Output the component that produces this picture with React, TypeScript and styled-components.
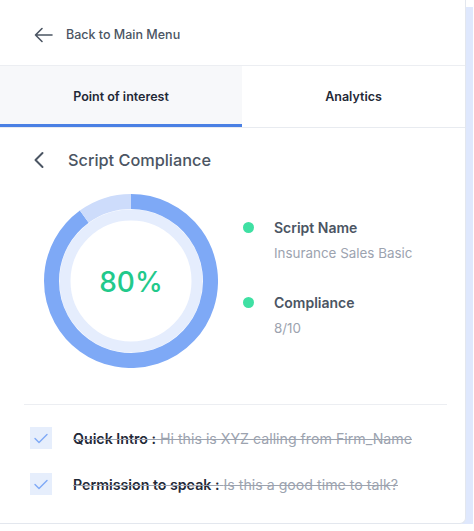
import React from "react";
import styled, { createGlobalStyle } from "styled-components";

const GlobalStyle = createGlobalStyle`
  html, body {
    margin: 0;
    padding: 0;
    background: #ffffff;
    font-family: Inter, "Noto Sans", sans-serif;
  }
`;

const ring = "#7ea9f6";
const ringGap = "#cddcfb";
const ringInner = "#e5edfd";

const Card = styled.div`
  width: 466px;
  height: 524px;
  box-sizing: border-box;
  background: #ffffff;
  border-right: 1px solid #e3e7ee;
  border-bottom: 1px solid #e3e7ee;
  border-bottom-right-radius: 6px;
  box-shadow: 7px 7px 0 #dfe8fd;
  display: flex;
  flex-direction: column;
`;

const BackRow = styled.div`
  height: 66px;
  display: flex;
  align-items: center;
  padding: 4px 0 0 34px;
  gap: 13px;
  color: #4b5563;
  font-size: 12.5px;
  font-weight: 500;
  border-bottom: 1px solid #eceef2;
  box-sizing: border-box;
`;

const Tabs = styled.div`
  display: flex;
  height: 62px;
  border-bottom: 1px solid #e8ebf0;
  box-sizing: border-box;
`;

const Tab = styled.div<{ $active?: boolean }>`
  flex: ${(p) => (p.$active ? "0 0 242px" : "1")};
  display: flex;
  align-items: center;
  justify-content: center;
  font-size: 12.5px;
  font-weight: 600;
  color: #1f2937;
  background: ${(p) => (p.$active ? "#f7f8fa" : "#ffffff")};
  border-bottom: 3px solid ${(p) => (p.$active ? "#4a80e4" : "transparent")};
  box-sizing: border-box;
  padding-top: 3px;
`;

const TitleRow = styled.div`
  display: flex;
  align-items: center;
  height: 22px;
  margin-top: 21px;
  padding-left: 33px;
  gap: 23px;
  font-size: 16.3px;
  font-weight: 500;
  color: #4b5563;
`;

const Summary = styled.div`
  display: flex;
  align-items: flex-start;
  padding-left: 44px;
  margin-top: 23px;
  gap: 25px;
`;

const Donut = styled.div`
  position: relative;
  width: 174px;
  height: 174px;
`;

const Percent = styled.div`
  position: absolute;
  inset: 0;
  display: flex;
  align-items: center;
  justify-content: center;
  padding-top: 1px;
  font-size: 28px;
  font-weight: 500;
  color: #22c98b;
`;

const Legend = styled.div`
  display: flex;
  flex-direction: column;
  gap: 30px;
  padding-top: 24px;
`;

const LegendItem = styled.div`
  display: grid;
  grid-template-columns: 11px 1fr;
  column-gap: 20px;
  row-gap: 7px;
  align-items: center;
`;

const Dot = styled.span`
  width: 11px;
  height: 11px;
  border-radius: 50%;
  background: #3fe0a3;
`;

const LegendTitle = styled.div`
  font-size: 14px;
  font-weight: 600;
  color: #4b5563;
  line-height: 19px;
`;

const LegendValue = styled.div`
  grid-column: 2;
  font-size: 13.4px;
  color: #9ca3af;
  line-height: 19px;
`;

const Divider = styled.div`
  margin: 36px 18px 0 24px;
  height: 1px;
  background: #eceef2;
`;

const Checklist = styled.div`
  display: flex;
  flex-direction: column;
  gap: 24px;
  padding-left: 30px;
  margin-top: 22px;
`;

const CheckItem = styled.div`
  display: flex;
  align-items: center;
  gap: 21px;
  height: 22px;
`;

const CheckBox = styled.span`
  width: 22px;
  height: 22px;
  background: #e6eefc;
  display: flex;
  align-items: center;
  justify-content: center;
`;

const CheckText = styled.div`
  font-size: 14.2px;
  color: #9ca3af;
  text-decoration: line-through;
  white-space: nowrap;
`;

const CheckLabel = styled.span`
  font-weight: 600;
  color: #1f2937;
`;

function arcPath(cx: number, cy: number, r: number, a0: number, a1: number) {
  const p = (a: number) => {
    const rad = ((a - 90) * Math.PI) / 180;
    return [cx + r * Math.cos(rad), cy + r * Math.sin(rad)];
  };
  const [x0, y0] = p(a0);
  const [x1, y1] = p(a1);
  const large = a1 - a0 > 180 ? 1 : 0;
  return `M ${x0} ${y0} A ${r} ${r} 0 ${large} 1 ${x1} ${y1}`;
}

const items = [
  { label: "Quick Intro :", text: "Hi this is XYZ calling from Firm_Name" },
  { label: "Permission to speak :", text: "Is this a good time to talk?" },
];

export default function App() {
  return (
    <>
      <GlobalStyle />
      <Card>
        <BackRow>
          <svg width="19" height="16" viewBox="0 0 19 16" fill="none" stroke="#4b5563" strokeWidth="1.6" strokeLinecap="round" strokeLinejoin="round">
            <path d="M18 8H1.5M8 1.5L1.5 8L8 14.5" />
          </svg>
          Back to Main Menu
        </BackRow>
        <Tabs>
          <Tab $active>Point of interest</Tab>
          <Tab>Analytics</Tab>
        </Tabs>
        <TitleRow>
          <svg width="12" height="18" viewBox="0 0 12 18" fill="none" stroke="#4b5563" strokeWidth="2" strokeLinecap="round" strokeLinejoin="round">
            <path d="M9.5 2L2.5 9L9.5 16" />
          </svg>
          Script Compliance
        </TitleRow>
        <Summary>
          <Donut>
            <svg width="174" height="174" viewBox="0 0 174 174">
              <circle cx="87" cy="87" r="66" fill="none" stroke={ringInner} strokeWidth="11" />
              <path d={arcPath(87, 87, 79.5, 0, 324)} fill="none" stroke={ring} strokeWidth="15" />
              <path d={arcPath(87, 87, 79.5, 324, 360)} fill="none" stroke={ringGap} strokeWidth="15" />
            </svg>
            <Percent>80%</Percent>
          </Donut>
          <Legend>
            <LegendItem>
              <Dot />
              <LegendTitle>Script Name</LegendTitle>
              <LegendValue>Insurance Sales Basic</LegendValue>
            </LegendItem>
            <LegendItem>
              <Dot />
              <LegendTitle>Compliance</LegendTitle>
              <LegendValue>8/10</LegendValue>
            </LegendItem>
          </Legend>
        </Summary>
        <Divider />
        <Checklist>
          {items.map((it) => (
            <CheckItem key={it.label}>
              <CheckBox>
                <svg width="14" height="11" viewBox="0 0 14 11" fill="none" stroke={ring} strokeWidth="1.4" strokeLinecap="round" strokeLinejoin="round">
                  <path d="M1 5.5L5 9.5L13 1.5" />
                </svg>
              </CheckBox>
              <CheckText>
                <CheckLabel>{it.label}</CheckLabel> {it.text}
              </CheckText>
            </CheckItem>
          ))}
        </Checklist>
      </Card>
    </>
  );
}
